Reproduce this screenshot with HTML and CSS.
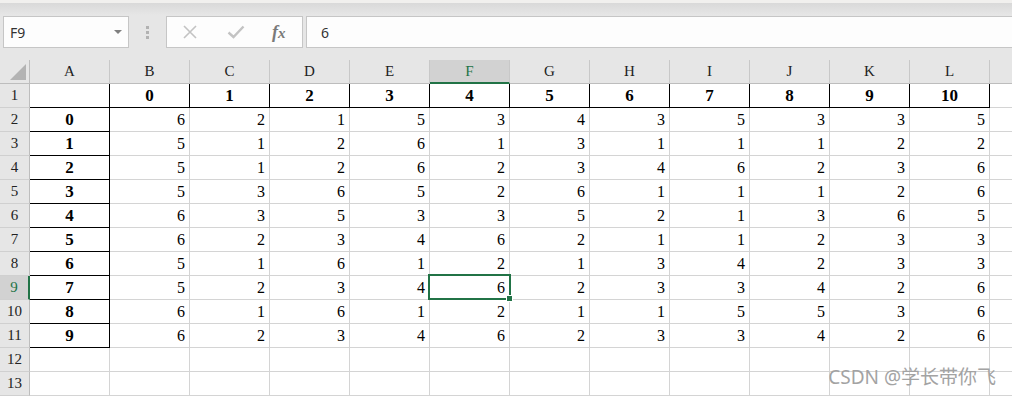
FILE: index.html
```html
<!DOCTYPE html>
<html lang="en">
<head>
    <meta charset="UTF-8">
    <meta name="viewport" content="width=device-width, initial-scale=1.0">
    <title>Sheet1</title>
    <link rel="stylesheet" href="styles.css">
</head>
<body>
    <div class="topline"></div>

    <!-- Formula bar -->
    <div class="formula-bar">
        <div class="name-box">
            <span>F9</span>
            <span class="caret"></span>
        </div>
        <div class="grip"><i></i><i></i><i></i></div>
        <div class="fx-box">
            <svg class="icon" width="16" height="16" viewBox="0 0 16 16">
                <path d="M2 2 L14 14 M14 2 L2 14" stroke="#c3c3c3" stroke-width="1.6" fill="none"/>
            </svg>
            <svg class="icon" width="18" height="16" viewBox="0 0 18 16">
                <path d="M1.5 8.5 L6.5 13 L16.5 2.5" stroke="#c3c3c3" stroke-width="2.4" fill="none"/>
            </svg>
            <span class="fx">f<i>x</i></span>
        </div>
        <div class="formula-input">6</div>
    </div>

    <!-- Worksheet -->
    <div class="sheet">
        <div class="row head">
            <div class="corner"><span class="tri"></span></div>
            <div class="ch">A</div><div class="ch">B</div><div class="ch">C</div><div class="ch">D</div>
            <div class="ch">E</div><div class="ch sel">F</div><div class="ch">G</div><div class="ch">H</div>
            <div class="ch">I</div><div class="ch">J</div><div class="ch">K</div><div class="ch">L</div>
            <div class="ch"></div>
        </div>
        <div class="row">
            <div class="rh">1</div>
            <div class="c kr kb"></div>
            <div class="c b kr kb">0</div><div class="c b kr kb">1</div><div class="c b kr kb">2</div>
            <div class="c b kr kb">3</div><div class="c b kr kb">4</div><div class="c b kr kb">5</div>
            <div class="c b kr kb">6</div><div class="c b kr kb">7</div><div class="c b kr kb">8</div>
            <div class="c b kr kb">9</div><div class="c b kr kb">10</div>
            <div class="c"></div>
        </div>
        <div class="row">
            <div class="rh">2</div><div class="c b kr kb">0</div>
            <div class="c">6</div><div class="c">2</div><div class="c">1</div><div class="c">5</div>
            <div class="c">3</div><div class="c">4</div><div class="c">3</div><div class="c">5</div>
            <div class="c">3</div><div class="c">3</div><div class="c">5</div><div class="c"></div>
        </div>
        <div class="row">
            <div class="rh">3</div><div class="c b kr kb">1</div>
            <div class="c">5</div><div class="c">1</div><div class="c">2</div><div class="c">6</div>
            <div class="c">1</div><div class="c">3</div><div class="c">1</div><div class="c">1</div>
            <div class="c">1</div><div class="c">2</div><div class="c">2</div><div class="c"></div>
        </div>
        <div class="row">
            <div class="rh">4</div><div class="c b kr kb">2</div>
            <div class="c">5</div><div class="c">1</div><div class="c">2</div><div class="c">6</div>
            <div class="c">2</div><div class="c">3</div><div class="c">4</div><div class="c">6</div>
            <div class="c">2</div><div class="c">3</div><div class="c">6</div><div class="c"></div>
        </div>
        <div class="row">
            <div class="rh">5</div><div class="c b kr kb">3</div>
            <div class="c">5</div><div class="c">3</div><div class="c">6</div><div class="c">5</div>
            <div class="c">2</div><div class="c">6</div><div class="c">1</div><div class="c">1</div>
            <div class="c">1</div><div class="c">2</div><div class="c">6</div><div class="c"></div>
        </div>
        <div class="row">
            <div class="rh">6</div><div class="c b kr kb">4</div>
            <div class="c">6</div><div class="c">3</div><div class="c">5</div><div class="c">3</div>
            <div class="c">3</div><div class="c">5</div><div class="c">2</div><div class="c">1</div>
            <div class="c">3</div><div class="c">6</div><div class="c">5</div><div class="c"></div>
        </div>
        <div class="row">
            <div class="rh">7</div><div class="c b kr kb">5</div>
            <div class="c">6</div><div class="c">2</div><div class="c">3</div><div class="c">4</div>
            <div class="c">6</div><div class="c">2</div><div class="c">1</div><div class="c">1</div>
            <div class="c">2</div><div class="c">3</div><div class="c">3</div><div class="c"></div>
        </div>
        <div class="row">
            <div class="rh">8</div><div class="c b kr kb">6</div>
            <div class="c">5</div><div class="c">1</div><div class="c">6</div><div class="c">1</div>
            <div class="c">2</div><div class="c">1</div><div class="c">3</div><div class="c">4</div>
            <div class="c">2</div><div class="c">3</div><div class="c">3</div><div class="c"></div>
        </div>
        <div class="row">
            <div class="rh sel">9</div><div class="c b kr kb">7</div>
            <div class="c">5</div><div class="c">2</div><div class="c">3</div><div class="c">4</div>
            <div class="c active">6<span class="cursor"><span class="handle"></span></span></div>
            <div class="c">2</div><div class="c">3</div><div class="c">3</div>
            <div class="c">4</div><div class="c">2</div><div class="c">6</div><div class="c"></div>
        </div>
        <div class="row">
            <div class="rh">10</div><div class="c b kr kb">8</div>
            <div class="c">6</div><div class="c">1</div><div class="c">6</div><div class="c">1</div>
            <div class="c">2</div><div class="c">1</div><div class="c">1</div><div class="c">5</div>
            <div class="c">5</div><div class="c">3</div><div class="c">6</div><div class="c"></div>
        </div>
        <div class="row">
            <div class="rh">11</div><div class="c b kr kb">9</div>
            <div class="c">6</div><div class="c">2</div><div class="c">3</div><div class="c">4</div>
            <div class="c">6</div><div class="c">2</div><div class="c">3</div><div class="c">3</div>
            <div class="c">4</div><div class="c">2</div><div class="c">6</div><div class="c"></div>
        </div>
        <div class="row">
            <div class="rh">12</div>
            <div class="c"></div><div class="c"></div><div class="c"></div><div class="c"></div><div class="c"></div>
            <div class="c"></div><div class="c"></div><div class="c"></div><div class="c"></div><div class="c"></div>
            <div class="c"></div><div class="c"></div><div class="c"></div>
        </div>
        <div class="row">
            <div class="rh">13</div>
            <div class="c"></div><div class="c"></div><div class="c"></div><div class="c"></div><div class="c"></div>
            <div class="c"></div><div class="c"></div><div class="c"></div><div class="c"></div><div class="c"></div>
            <div class="c"></div><div class="c"></div><div class="c"></div>
        </div>

        <!-- Watermark -->
        <div class="watermark">CSDN @学长带你飞</div>
    </div>
</body>
</html>
```

FILE: styles.css
```css
body {
    margin: 0;
    width: 1012px;
    height: 396px;
    overflow: hidden;
    background: #e6e6e6;
    font-family: "Liberation Serif", "Noto Sans CJK SC", serif;
}

.topline {
    height: 3px;
    background: #f1f0ee;
}

/* Formula bar */
.formula-bar {
    display: flex;
    align-items: center;
    height: 57px;
    padding: 13px 0 12px;
    box-sizing: border-box;
    background: linear-gradient(#d9d9d9, #e6e6e6 12px);
    font-family: "Noto Sans", "Open Sans", sans-serif;
    font-size: 14px;
    color: #333;
}

.name-box,
.fx-box,
.formula-input {
    height: 32px;
    box-sizing: border-box;
    border: 1px solid #c6c6c6;
    background: #fdfdfd;
    display: flex;
    align-items: center;
}

.name-box {
    width: 126px;
    margin-left: 3px;
    padding-left: 6px;
}

.caret {
    margin-left: auto;
    margin-right: 6px;
    border-left: 4px solid transparent;
    border-right: 4px solid transparent;
    border-top: 4px solid #7f7f7f;
}

.grip {
    display: flex;
    flex-direction: column;
    gap: 2px;
    margin: 0 17px;
}

.grip i {
    width: 3px;
    height: 3px;
    background: #b2b2b2;
}

.fx-box {
    width: 137px;
    padding-left: 15px;
}

.fx-box .icon {
    margin-right: 29px;
}

.fx-box .icon + .icon {
    margin-right: 27px;
}

.fx {
    font-family: "Liberation Serif", serif;
    font-style: italic;
    font-weight: bold;
    font-size: 18px;
    color: #7a7a7a;
}

.fx i {
    font-size: 15px;
}

.formula-input {
    flex: 1;
    min-width: 0;
    margin-left: 3px;
    border-right: none;
    padding-left: 14px;
}

/* Worksheet */
.sheet {
    position: relative;
    width: 1012px;
    height: 336px;
    overflow: hidden;
    background: #fff;
}

.row {
    display: grid;
    grid-template-columns: 30px repeat(13, 80px);
    height: 24px;
}

.row > div {
    box-sizing: border-box;
    display: flex;
    align-items: center;
}

.head {
    background: #e6e6e6;
}

.corner {
    position: relative;
    border-right: 1px solid #bdbdbd;
    border-bottom: 1px solid #bdbdbd;
}

.tri {
    position: absolute;
    left: 10px;
    top: 4px;
    width: 16px;
    height: 16px;
    background: #b3b3b3;
    clip-path: polygon(100% 0, 100% 100%, 0 100%);
}

.ch {
    justify-content: center;
    font-size: 15px;
    color: #222;
    border-right: 1px solid #c8c8c8;
    border-bottom: 1px solid #bdbdbd;
}

.ch.sel {
    background: #d2d2d2;
    color: #217346;
    border-bottom: 2px solid #217346;
}

.rh {
    justify-content: center;
    font-size: 15px;
    color: #222;
    background: #e6e6e6;
    border-right: 1px solid #bdbdbd;
    border-bottom: 1px solid #d0d0d0;
}

.rh.sel {
    background: #d2d2d2;
    color: #217346;
    border-right: 2px solid #217346;
}

/* Cells */
.c {
    justify-content: flex-end;
    padding-right: 4px;
    font-size: 16px;
    color: #000;
    border-right: 1px solid #d4d4d4;
    border-bottom: 1px solid #d4d4d4;
}

.c.b {
    justify-content: center;
    padding-right: 0;
    font-weight: bold;
    font-size: 17px;
}

.c.kr {
    border-right-color: #000;
}

.c.kb {
    border-bottom-color: #000;
}

.active {
    position: relative;
}

.cursor {
    position: absolute;
    left: -2px;
    top: -2px;
    right: -2px;
    bottom: -1px;
    border: 2px solid #217346;
}

.handle {
    position: absolute;
    right: -4px;
    bottom: -4px;
    width: 5px;
    height: 5px;
    background: #217346;
    border: 1px solid #fff;
}

.watermark {
    position: absolute;
    right: 16px;
    bottom: 6px;
    font-family: "Noto Sans", "Noto Sans CJK SC", sans-serif;
    font-size: 19px;
    color: #a3a3a3;
    pointer-events: none;
}
```
